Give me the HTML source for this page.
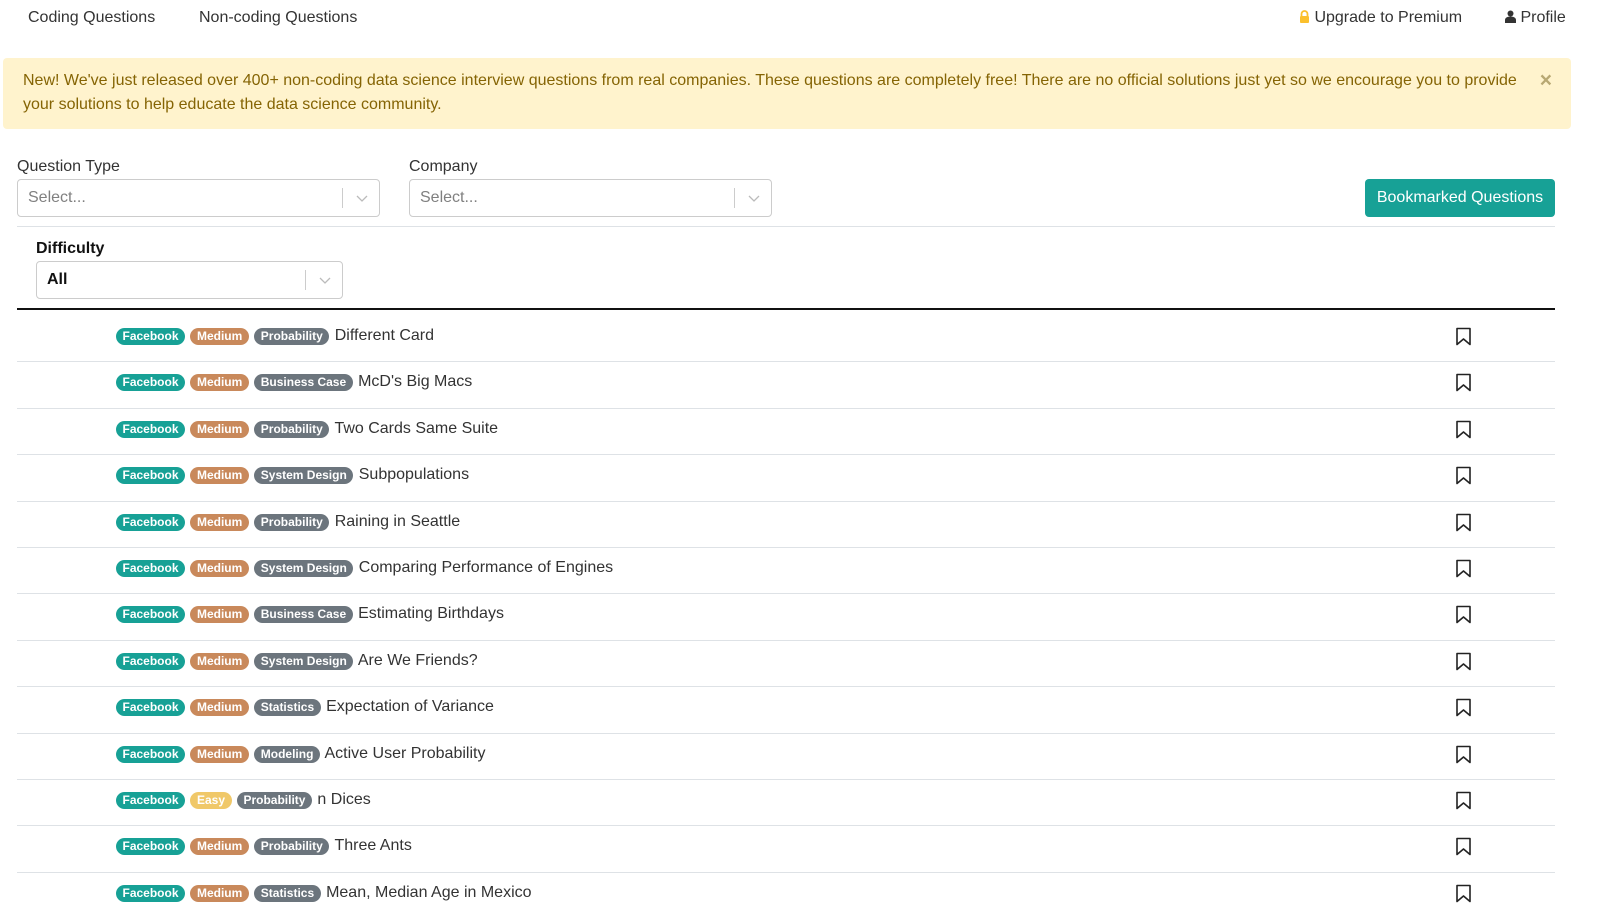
<!DOCTYPE html>
<html style="width:1600px;height:915px;overflow:hidden;margin:0"><head><meta charset="utf-8"><style>
*{box-sizing:border-box}
body{margin:0;font-family:"Liberation Sans",Arial,sans-serif;color:#212529;background:#fff;width:1600px;height:915px;overflow:hidden;position:relative}
.nav{position:absolute;top:0;left:0;right:0;height:36px;font-size:16px;color:#333}
.nav span{position:absolute;top:9px;white-space:nowrap}
.alert{position:absolute;left:3px;top:58px;width:1568px;height:71px;background:#fff3cd;border-radius:4px;color:#856404;font-size:16px;line-height:24px;padding:11px 20px 11px 20px;}
.alert .x{position:absolute;right:19px;top:11px;font-weight:bold;font-size:21px;color:#b8a873}
.lbl{position:absolute;font-size:16px;color:#333}
.sel{position:absolute;height:38px;border:1px solid #ccc;border-radius:4px;background:#fff;font-size:16px;color:#808080;padding:9px 10px}
.sel .sep{position:absolute;right:36px;top:8px;width:1px;height:20px;background:#ccc}
.sel svg{position:absolute;right:10px;top:13px}
.btn{position:absolute;left:1365px;top:179px;width:190px;height:38px;background:#17a196;color:#fff;border-radius:4px;font-size:16px;text-align:center;line-height:38px}
.hr{position:absolute;left:17px;width:1538px}
.row{position:absolute;left:17px;width:1538px;height:46.4px;border-bottom:1px solid #dee2e6}
.row .c{position:absolute;left:99px;top:11px;font-size:16px;line-height:18px;white-space:nowrap;color:#333}
.b{display:inline-block;font-size:12px;font-weight:bold;color:#fff;border-radius:9px;padding:0 6.5px;height:17px;line-height:17px;vertical-align:0;margin-right:1px}
.f{background:#17a196}.m{background:#c9895b}.e{background:#f0c869}.g{background:#6c757d}
.bm{position:absolute;left:1438px;top:11px}
</style></head><body>
<div class="nav"><span style="left:28px">Coding Questions</span><span style="left:199px">Non-coding Questions</span>
<span style="left:1299px"><svg width="11" height="13" viewBox="0 0 11 13" style="vertical-align:-1px"><path d="M2.5 6V4a3 3 0 0 1 6 0v2" fill="none" stroke="#fbc02d" stroke-width="1.8"/><rect x="1" y="6" width="9" height="7" rx="1" fill="#fbc02d"/></svg> Upgrade to Premium</span>
<span style="left:1505px"><svg width="11" height="13" viewBox="0 0 11 13" style="vertical-align:-1px"><circle cx="5.5" cy="3.5" r="3" fill="#333"/><path d="M0 13v-3c0-2 2-3.5 5.5-3.5S11 8 11 10v3z" fill="#333"/></svg> Profile</span></div>
<div class="alert">New! We've just released over 400+ non-coding data science interview questions from real companies. These questions are completely free! There are no official solutions just yet so we encourage you to provide your solutions to help educate the data science community.<span class="x">×</span></div>
<div class="lbl" style="left:17px;top:158px">Question Type</div>
<div class="sel" style="left:17px;top:179px;width:363px">Select...<span class="sep"></span><svg width="14" height="10"><path d="M2 3l5 5 5-5" fill="none" stroke="#bbb" stroke-width="1.3"/></svg></div>
<div class="lbl" style="left:409px;top:158px">Company</div>
<div class="sel" style="left:409px;top:179px;width:363px">Select...<span class="sep"></span><svg width="14" height="10"><path d="M2 3l5 5 5-5" fill="none" stroke="#bbb" stroke-width="1.3"/></svg></div>
<div class="btn">Bookmarked Questions</div>
<div class="hr" style="top:226px;border-top:1px solid #dee2e6"></div>
<div class="lbl" style="left:36px;top:240px;font-weight:bold;color:#111">Difficulty</div>
<div class="sel" style="left:36px;top:261px;width:307px;color:#111;font-weight:bold">All<span class="sep"></span><svg width="14" height="10"><path d="M2 3l5 5 5-5" fill="none" stroke="#bbb" stroke-width="1.3"/></svg></div>
<div class="hr" style="top:308px;border-top:2px solid #111"></div>
<div id="rows"></div>
<script>
var d=[["m","Probability","Different Card"],["m","Business Case","McD's Big Macs"],["m","Probability","Two Cards Same Suite"],["m","System Design","Subpopulations"],["m","Probability","Raining in Seattle"],["m","System Design","Comparing Performance of Engines"],["m","Business Case","Estimating Birthdays"],["m","System Design","Are We Friends?"],["m","Statistics","Expectation of Variance"],["m","Modeling","Active User Probability"],["e","Probability","n Dices"],["m","Probability","Three Ants"],["m","Statistics","Mean, Median Age in Mexico"]];
var h="";d.forEach(function(r,i){h+='<div class="row" style="top:'+(316+i*46.4)+'px"><div class="c"><span class="b f">Facebook</span> <span class="b '+r[0]+'">'+(r[0]=="m"?"Medium":"Easy")+'</span> <span class="b g">'+r[1]+'</span> '+r[2]+'</div><svg class="bm" width="17" height="19" viewBox="0 0 17 19"><path d="M2 1.5h13v16l-6.5-5.5L2 17.5z" fill="none" stroke="#222" stroke-width="1.6" stroke-linejoin="round"/></svg></div>'});
document.getElementById("rows").innerHTML=h;
</script>
</body></html>
